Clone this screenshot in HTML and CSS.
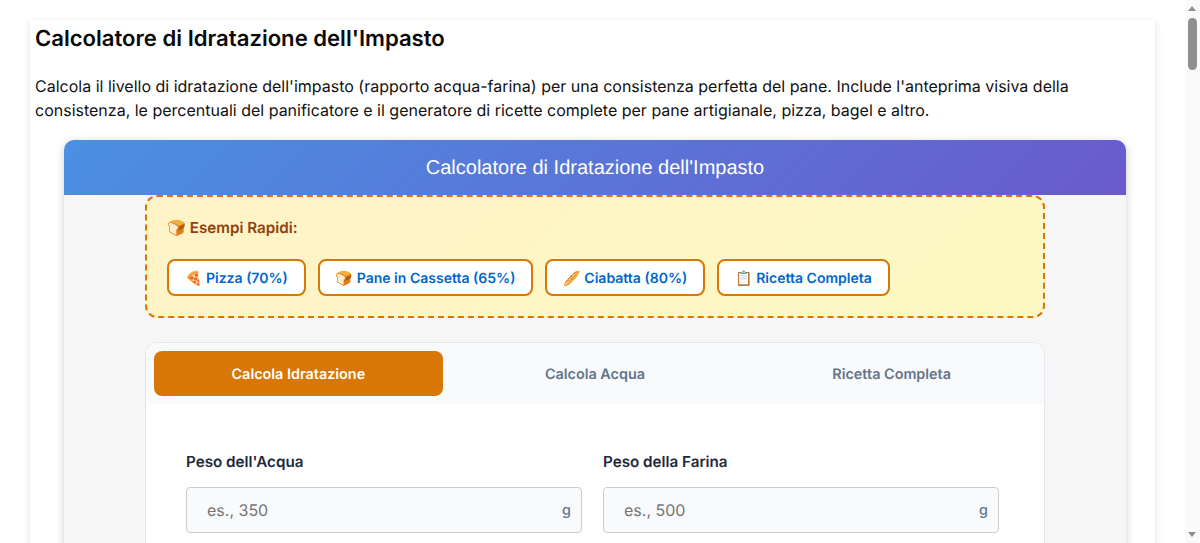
FILE: index.html
```html
<!DOCTYPE html>
<html lang="it">
<head>
<meta charset="utf-8">
<title>Calcolatore di Idratazione dell'Impasto</title>
<link rel="stylesheet" href="styles.css">
</head>
<body>
<main class="page-card">
  <h1 class="page-title">Calcolatore di Idratazione dell'Impasto</h1>
  <p class="page-intro">Calcola il livello di idratazione dell'impasto (rapporto acqua-farina) per una consistenza perfetta del pane. Include l'anteprima visiva della consistenza, le percentuali del panificatore e il generatore di ricette complete per pane artigianale, pizza, bagel e altro.</p>
  <section class="calc">
    <header class="calc-header">Calcolatore di Idratazione dell'Impasto</header>
    <div class="calc-body">
      <div class="examples">
        <div class="examples-title">🍞 Esempi Rapidi:</div>
        <div class="examples-row">
          <button class="example-btn" type="button">🍕 Pizza (70%)</button>
          <button class="example-btn" type="button">🍞 Pane in Cassetta (65%)</button>
          <button class="example-btn" type="button">🥖 Ciabatta (80%)</button>
          <button class="example-btn" type="button">📋 Ricetta Completa</button>
        </div>
      </div>
      <div class="panel">
        <div class="tabs">
          <button class="tab tab-active" type="button">Calcola Idratazione</button>
          <button class="tab" type="button">Calcola Acqua</button>
          <button class="tab" type="button">Ricetta Completa</button>
        </div>
        <div class="panel-content">
          <div class="field">
            <label class="field-label" for="acqua">Peso dell'Acqua</label>
            <div class="input-wrap">
              <input class="field-input" id="acqua" type="text" placeholder="es., 350">
              <span class="unit">g</span>
            </div>
          </div>
          <div class="field">
            <label class="field-label" for="farina">Peso della Farina</label>
            <div class="input-wrap">
              <input class="field-input" id="farina" type="text" placeholder="es., 500">
              <span class="unit">g</span>
            </div>
          </div>
        </div>
      </div>
    </div>
  </section>
</main>
<div class="scrollbar" aria-hidden="true">
  <span class="scroll-arrow-up"></span>
  <span class="scroll-thumb"></span>
  <span class="scroll-arrow-down"></span>
</div>
</body>
</html>
```
FILE: styles.css
```css
html { overflow-y: scroll; }
* { box-sizing: border-box; }
body {
  margin: 0;
  background: #fff;
  font-family: Inter, "Noto Color Emoji", sans-serif;
  color: #111;
  text-rendering: geometricPrecision;
}
.page-card {
  width: 1125px;
  min-height: 5300px;
  margin: 20px 0 30px 30px;
  padding: 6px 5px 5px;
  background: #fff;
  box-shadow: 0 2px 8px rgba(0,0,0,.12);
}
.page-title {
  margin: 0;
  font-size: 22.1px;
  line-height: 26px;
  font-weight: 600;
  color: #0a0a0a;
}
.page-intro {
  margin: 22px 0 0;
  font-size: 16px;
  line-height: 24px;
  color: #111;
}
.calc {
  width: 1062px;
  margin: 18px 0 0 29px;
  border-radius: 10px;
  background: #f6f6f6;
  box-shadow: 0 2px 8px rgba(0,0,0,.2);
  min-height: 800px;
}
.calc-header {
  height: 55px;
  padding-top: 2px;
  display: flex;
  align-items: center;
  justify-content: center;
  border-radius: 10px 10px 0 0;
  background: linear-gradient(135deg, #4a90e2, #6a5acd);
  color: #fff;
  font-family: "Liberation Sans", sans-serif;
  font-size: 20px;
}
.calc-body {
  width: 900px;
  margin: 0 auto;
}
.examples {
  height: 123px;
  padding: 20px;
  background: linear-gradient(135deg, #fef3c7, #fef9c3);
  border: 2px dashed #d97706;
  border-radius: 12px;
}
.examples-title {
  font-size: 15.2px;
  line-height: 21px;
  font-weight: 600;
  color: #92400e;
}
.examples-row {
  display: flex;
  gap: 12px;
  margin-top: 21px;
}
.example-btn {
  height: 37px;
  padding: 2px 16px 0;
  background: #fff;
  border: 2px solid #d97706;
  border-radius: 8px;
  font: 600 14.02px Inter, "Noto Color Emoji", sans-serif;
  color: #0066cc;
  text-rendering: geometricPrecision;
}
.panel {
  margin-top: 24px;
  background: #fff;
  border: 1px solid #e2e8f0;
  border-radius: 12px;
  overflow: hidden;
}
.tabs {
  display: flex;
  gap: 8px;
  padding: 8px;
  height: 61px;
  background: #f8fafc;
}
.tab {
  flex: 1;
  height: 45px;
  padding: 2px 0 0;
  background: transparent;
  border: 0;
  border-radius: 8px;
  font: 600 14.4px Inter, sans-serif;
  color: #64748b;
  text-rendering: geometricPrecision;
}
.tab-active {
  background: #d97706;
  color: #fff;
}
.panel-content {
  display: grid;
  grid-template-columns: 396px 396px;
  column-gap: 21px;
  padding: 47px 45px 40px 40px;
}
.field-label {
  display: block;
  font-size: 15.2px;
  line-height: 21px;
  font-weight: 600;
  color: #1e293b;
}
.input-wrap {
  position: relative;
  margin-top: 15px;
}
.field-input {
  display: block;
  width: 100%;
  height: 46px;
  padding: 0 40px 0 20px;
  background: #f8fafc;
  border: 1px solid #ccc;
  border-radius: 4px;
  font: 16px Inter, sans-serif;
  text-rendering: geometricPrecision;
}
.field-input::placeholder { color: #757575; }
.unit {
  position: absolute;
  right: 11px;
  top: 14px;
  font-size: 14.4px;
  line-height: 20px;
  font-weight: 500;
  color: #64748b;
}
.scrollbar {
  position: fixed;
  top: 0;
  right: 0;
  bottom: 0;
  width: 15px;
  background: #fafafa;
}
.scroll-thumb {
  position: absolute;
  left: 3px;
  top: 18px;
  width: 9px;
  height: 52px;
  border-radius: 5px;
  background: #8f8f8f;
}
.scroll-arrow-up,
.scroll-arrow-down {
  position: absolute;
  left: 3px;
  width: 0;
  height: 0;
  border-left: 4.5px solid transparent;
  border-right: 4.5px solid transparent;
}
.scroll-arrow-up {
  top: 6px;
  border-bottom: 5px solid #8f8f8f;
}
.scroll-arrow-down {
  bottom: 6px;
  border-top: 5px solid #8f8f8f;
}
```
